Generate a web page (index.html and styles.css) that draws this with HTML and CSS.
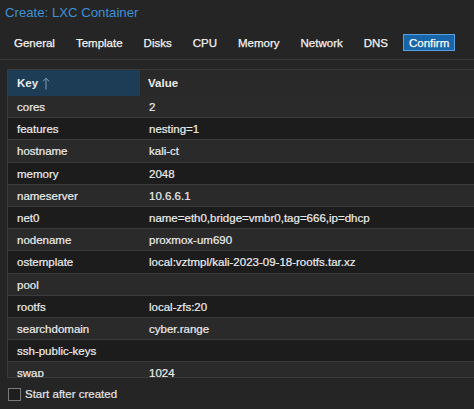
FILE: index.html
```html
<!DOCTYPE html>
<html>
<head>
<meta charset="utf-8">
<link rel="stylesheet" href="styles.css">
</head>
<body>
<div class="win">
  <div class="title">Create: LXC Container</div>
  <div class="tabs">
    <span class="tab">General</span>
    <span class="tab">Template</span>
    <span class="tab">Disks</span>
    <span class="tab">CPU</span>
    <span class="tab">Memory</span>
    <span class="tab">Network</span>
    <span class="tab">DNS</span>
    <span class="tab active">Confirm</span>
  </div>
  <div class="grid">
    <div class="ghead">
      <div class="hkey">Key
        <svg class="arrow" width="8" height="13" viewBox="0 0 8 13"><path d="M4 1.2V12.5M0.9 4.4L4 1.2L7.1 4.4" fill="none" stroke="#7f9fbd" stroke-width="1"/></svg>
      </div>
      <div class="hval">Value</div>
    </div>
    <div class="gbody">
      <div class="row"><div class="k">cores</div><div class="v">2</div></div>
      <div class="row alt"><div class="k">features</div><div class="v">nesting=1</div></div>
      <div class="row"><div class="k">hostname</div><div class="v">kali-ct</div></div>
      <div class="row alt"><div class="k">memory</div><div class="v">2048</div></div>
      <div class="row"><div class="k">nameserver</div><div class="v">10.6.6.1</div></div>
      <div class="row alt"><div class="k">net0</div><div class="v">name=eth0,bridge=vmbr0,tag=666,ip=dhcp</div></div>
      <div class="row"><div class="k">nodename</div><div class="v">proxmox-um690</div></div>
      <div class="row alt"><div class="k">ostemplate</div><div class="v">local:vztmpl/kali-2023-09-18-rootfs.tar.xz</div></div>
      <div class="row"><div class="k">pool</div><div class="v"></div></div>
      <div class="row alt"><div class="k">rootfs</div><div class="v">local-zfs:20</div></div>
      <div class="row"><div class="k">searchdomain</div><div class="v">cyber.range</div></div>
      <div class="row alt"><div class="k">ssh-public-keys</div><div class="v"></div></div>
      <div class="row"><div class="k">swap</div><div class="v">1024</div></div>
    </div>
  </div>
  <div class="footer">
    <span class="cb"></span>
    <span class="cblabel">Start after created</span>
  </div>
</div>
</body>
</html>
```
FILE: styles.css
```css
html, body {
  margin: 0;
  padding: 0;
  background: #252525;
}
body {
  font-family: "Liberation Sans", Arial, sans-serif;
  font-size: 11.5px;
  color: #ececec;
  width: 474px;
  height: 409px;
  overflow: hidden;
}
.win {
  display: flex;
  flex-direction: column;
}
.title {
  height: 25px;
  line-height: 25px;
  padding-left: 5px;
  font-size: 13.2px;
  color: #3d91d6;
}
.tabs {
  display: flex;
  gap: 9px;
  padding: 9px 0 8px 8px;
  border-bottom: 1px solid #3a3a3a;
}
.tab {
  padding: 1px 5px 0;
  border: 1px solid transparent;
  line-height: 14px;
  color: #f2f2f2;
  white-space: nowrap;
  -webkit-text-stroke: 0.25px #f2f2f2;
}
.tab.active {
  background: #1766a9;
  border-color: #5a9fdc;
  color: #ffffff;
}
.grid {
  margin: 9px 0 0 7px;
  border-top: 1px solid #3a3a3a;
  border-left: 1px solid #3a3a3a;
  border-bottom: 1px solid #3a3a3a;
}
.ghead {
  display: grid;
  grid-template-columns: 132px 1fr;
  height: 25px;
  border-bottom: 1px solid #3c3c3c;
  font-weight: bold;
  font-size: 11.5px;
}
.hkey {
  display: flex;
  align-items: center;
  gap: 4px;
  background: #1d3c55;
  border-right: 1px solid #3a3a3a;
  padding-left: 9px;
}
.arrow {
  display: block;
}
.hval {
  background: #292929;
  padding-left: 8px;
  line-height: 26px;
}
.gbody {
  height: 281px;
  overflow: hidden;
}
.row {
  display: grid;
  grid-template-columns: 133px 1fr;
  height: 21.2px;
  line-height: 22px;
  background: #2a2a2a;
  border-bottom: 1px solid #3b3b3b;
  white-space: nowrap;
  -webkit-text-stroke: 0.2px #ececec;
}
.row.alt {
  background: #1c1c1c;
}
.k {
  padding-left: 9px;
}
.v {
  padding-left: 8px;
}
.footer {
  display: flex;
  align-items: center;
  gap: 4px;
  padding: 9px 0 0 8px;
}
.cb {
  width: 11px;
  height: 11px;
  border: 1px solid #7a7a7a;
  background: #1e1e1e;
}
.cblabel {
  line-height: 14px;
  color: #e4e4e4;
  -webkit-text-stroke: 0.2px #e4e4e4;
}
```
